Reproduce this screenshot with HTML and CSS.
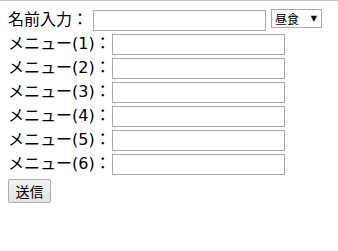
FILE: index.html
```html
<!DOCTYPE html>
<html lang="ja">
<head>
<meta charset="utf-8">
<link rel="stylesheet" href="styles.css">
</head>
<body>
<form class="form">
  <div class="row">
    <span class="label">名前入力：</span>
    <input class="text name" type="text">
    <span class="select">昼食<span class="arrow">▼</span></span>
  </div>
  <div class="row"><span class="label">メニュー(1)：</span><input class="text menu" type="text"></div>
  <div class="row"><span class="label">メニュー(2)：</span><input class="text menu" type="text"></div>
  <div class="row"><span class="label">メニュー(3)：</span><input class="text menu" type="text"></div>
  <div class="row"><span class="label">メニュー(4)：</span><input class="text menu" type="text"></div>
  <div class="row"><span class="label">メニュー(5)：</span><input class="text menu" type="text"></div>
  <div class="row"><span class="label">メニュー(6)：</span><input class="text menu" type="text"></div>
  <div class="actions"><button class="submit" type="button">送信</button></div>
</form>
</body>
</html>
```
FILE: styles.css
```css
html {
  border-top: 1px solid #c3c3c3;
  background: #fff;
}
body {
  margin: 7px 8px 8px 8px;
  font-family: "DejaVu Sans", "Noto Sans CJK JP", sans-serif;
  font-size: 16px;
  color: #000;
}
.form {
  display: flex;
  flex-direction: column;
}
.row {
  display: flex;
  align-items: center;
  height: 24px;
}
.label {
  white-space: nowrap;
  line-height: 24px;
}
.text {
  box-sizing: border-box;
  width: 173px;
  height: 21px;
  margin: 0;
  padding: 0 2px;
  border: 1px solid #a9a9a9;
  background: #fff;
  font-size: 13px;
}
.name {
  margin-left: 5px;
}
.menu {
  margin-left: 1px;
}
.select {
  box-sizing: border-box;
  display: flex;
  align-items: center;
  margin-left: 5px;
  width: 51px;
  height: 19px;
  padding: 0 4px 0 3px;
  border: 1px solid #a9a9a9;
  background: #fff;
  font-family: "Noto Sans CJK JP", sans-serif;
  font-size: 12px;
  margin-top: -3px;
}
.arrow {
  margin-left: auto;
  font-size: 8px;
  font-family: "DejaVu Sans", sans-serif;
}
.actions {
  display: flex;
  padding-top: 3px;
}
.submit {
  box-sizing: border-box;
  width: 43px;
  height: 24px;
  margin: 0;
  padding: 0;
  border: 1px solid #adadad;
  border-radius: 2px;
  background: linear-gradient(#f2f2f2, #e2e2e2);
  font-family: "Noto Sans CJK JP", sans-serif;
  font-size: 14px;
  color: #000;
}
```
